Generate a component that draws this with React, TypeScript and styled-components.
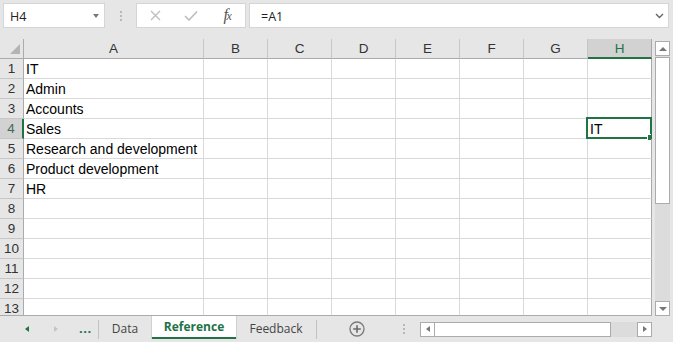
import React from 'react';
import styled, { createGlobalStyle } from 'styled-components';

const GREEN = '#217346';
const UI_FONT = '"Open Sans", "Noto Sans", "Liberation Sans", sans-serif';
const CELL_FONT = '"Liberation Sans", Arial, sans-serif';

const Global = createGlobalStyle`
  html, body { margin: 0; padding: 0; background: #e6e6e6; }
  #root { width: 673px; height: 342px; overflow: hidden; }
  * { box-sizing: border-box; }
`;

const Window = styled.div`
  width: 673px;
  height: 342px;
  display: flex;
  flex-direction: column;
  background: #e6e6e6;
  overflow: hidden;
`;

/* ---------- top formula bar ---------- */
const TopBar = styled.div`
  height: 39px;
  flex: none;
  display: flex;
  align-items: flex-start;
  padding: 3px 0 0 3px;
`;

const Field = styled.div<{ $w: number; $ml?: number; $pl?: number }>`
  width: ${p => p.$w}px;
  height: 25px;
  margin-left: ${p => p.$ml ?? 0}px;
  padding-left: ${p => p.$pl ?? 0}px;
  background: #fff;
  border: 1px solid #d5d5d5;
  display: flex;
  align-items: center;
  font-family: ${UI_FONT};
  font-size: 12.5px;
  color: #222;
`;

const FieldText = styled.span`
  flex: 1;
  padding-top: 1px;
`;

const Caret = styled.span`
  width: 0;
  height: 0;
  margin-right: 5px;
  border-left: 3.5px solid transparent;
  border-right: 3.5px solid transparent;
  border-top: 4px solid #777;
`;

const Chevron = styled.svg`
  width: 9px;
  height: 6px;
  margin-right: 4px;
`;

const DotSep = styled.div<{ $w: number; $h: number; $pr?: number }>`
  width: ${p => p.$w}px;
  height: ${p => p.$h}px;
  padding-right: ${p => p.$pr ?? 0}px;
  display: flex;
  align-items: center;
  justify-content: ${p => (p.$pr ? 'flex-end' : 'center')};
  flex: none;
`;

const Dots = styled.div`
  display: flex;
  flex-direction: column;
  gap: 2px;
  span {
    width: 2px;
    height: 2px;
    background: #b8b8b8;
    display: block;
  }
`;

const IconSlot = styled.div`
  width: 36px;
  height: 100%;
  display: flex;
  align-items: center;
  justify-content: center;
`;

const FxText = styled.span`
  font-family: "Liberation Serif", "DejaVu Serif", serif;
  font-style: italic;
  font-size: 16px;
  color: #555;
  letter-spacing: -1.5px;
  padding-bottom: 2px;
  span { font-size: 12px; }
`;

/* ---------- sheet ---------- */
const Main = styled.div`
  height: 277px;
  flex: none;
  display: flex;
`;

const Sheet = styled.div`
  width: 652px;
  height: 277px;
  overflow: hidden;
  background: #fff;
  border-bottom: 1px solid #ababab;
  display: grid;
  grid-template-columns: 24px 180px repeat(7, 64px);
  grid-auto-rows: 20px;
  font-family: ${CELL_FONT};
  font-size: 14px;
`;

const Cell = styled.div<{ $last?: boolean }>`
  position: relative;
  border-right: 1px solid ${p => (p.$last ? '#a8a8a8' : '#d9d9d9')};
  border-bottom: 1px solid #d9d9d9;
  padding: 0 0 0 2px;
  display: flex;
  align-items: center;
  white-space: nowrap;
  color: #000;
`;

const ColHead = styled.div<{ $sel?: boolean; $last?: boolean }>`
  background: ${p => (p.$sel ? '#d2d2d2' : '#e6e6e6')};
  border-right: 1px solid ${p => (p.$last ? '#a8a8a8' : '#c6c6c6')};
  border-bottom: ${p => (p.$sel ? `2px solid ${GREEN}` : '1px solid #ababab')};
  display: flex;
  align-items: center;
  justify-content: center;
  color: ${p => (p.$sel ? GREEN : '#333')};
  font-size: 13.5px;
`;

const RowHead = styled.div<{ $sel?: boolean }>`
  background: ${p => (p.$sel ? '#d2d2d2' : '#e6e6e6')};
  border-right: ${p => (p.$sel ? `2px solid ${GREEN}` : '1px solid #ababab')};
  border-bottom: 1px solid #c6c6c6;
  display: flex;
  align-items: center;
  justify-content: center;
  color: ${p => (p.$sel ? '#3f6b55' : '#333')};
  font-size: 13.5px;
`;

const Corner = styled.div`
  background: #e6e6e6;
  border-right: 1px solid #ababab;
  border-bottom: 1px solid #ababab;
  display: flex;
  align-items: flex-end;
  justify-content: flex-end;
  padding: 0 3px 4px 0;
`;

const CornerTri = styled.div`
  width: 0;
  height: 0;
  border-left: 10px solid transparent;
  border-bottom: 10px solid #b4b4b4;
`;

const Selection = styled.div`
  position: absolute;
  left: -2px;
  top: -2px;
  width: 66px;
  height: 22px;
  border: 2px solid ${GREEN};
  pointer-events: none;
`;

const FillHandle = styled.div`
  position: absolute;
  right: -2px;
  bottom: -3px;
  width: 4px;
  height: 5px;
  background: ${GREEN};
  box-shadow: -1px -1px 0 #fff;
`;

/* ---------- scrollbars ---------- */
const VScrollArea = styled.div`
  width: 21px;
  padding: 2px 0 0 3px;
  display: flex;
`;

const VScroll = styled.div`
  width: 15px;
  height: 275px;
  display: flex;
  flex-direction: column;
  gap: 1px;
  background: #dcdcdc;
`;

const ScrollBtn = styled.div<{ $len?: number }>`
  flex: none;
  width: ${p => p.$len ?? 15}px;
  height: 15px;
  background: #fff;
  border: 1px solid #ababab;
  display: flex;
  align-items: center;
  justify-content: center;
`;

const VThumb = styled.div`
  height: 147px;
  flex: none;
  background: #fff;
  border: 1px solid #ababab;
`;

const Track = styled.div`
  flex: 1;
  background: #dcdcdc;
`;

const Tri = styled.span<{ $dir: 'up' | 'down' | 'left' | 'right'; $color?: string }>`
  width: 0;
  height: 0;
  ${p => {
    const c = p.$color ?? '#777';
    switch (p.$dir) {
      case 'up':
        return `border-left:4px solid transparent;border-right:4px solid transparent;border-bottom:4px solid ${c};`;
      case 'down':
        return `border-left:4px solid transparent;border-right:4px solid transparent;border-top:4px solid ${c};`;
      case 'left':
        return `border-top:3.5px solid transparent;border-bottom:3.5px solid transparent;border-right:4px solid ${c};`;
      default:
        return `border-top:3.5px solid transparent;border-bottom:3.5px solid transparent;border-left:4px solid ${c};`;
    }
  }}
`;

/* ---------- sheet tabs ---------- */
const TabBar = styled.div`
  height: 26px;
  flex: none;
  display: flex;
  align-items: stretch;
  font-family: ${UI_FONT};
  font-size: 12px;
`;

const Nav = styled.div`
  width: 98px;
  display: flex;
  align-items: center;
  padding-left: 25px;
`;

const NavGap = styled.span<{ $w: number }>`
  width: ${p => p.$w}px;
`;

const Ellipsis = styled.span`
  color: ${GREEN};
  font-weight: 700;
  font-size: 13px;
  letter-spacing: 0.5px;
  padding-bottom: 2px;
`;

const VSep = styled.div`
  width: 1px;
  height: 19px;
  align-self: center;
  background: #c2c2c2;
`;

const Tab = styled.div<{ $w: number; $active?: boolean }>`
  width: ${p => p.$w}px;
  display: flex;
  align-items: center;
  justify-content: center;
  padding-bottom: ${p => (p.$active ? 0 : 1)}px;
  color: ${p => (p.$active ? GREEN : '#444')};
  font-weight: ${p => (p.$active ? 700 : 400)};
  background: ${p => (p.$active ? '#fff' : 'transparent')};
  height: ${p => (p.$active ? '23px' : 'auto')};
  border-bottom: ${p => (p.$active ? `2px solid ${GREEN}` : 'none')};
  box-shadow: ${p => (p.$active ? '1px 0 0 #d0d0d0, -1px 0 0 #d0d0d0' : 'none')};
  margin-left: ${p => (p.$active ? 1 : 0)}px;
`;

const AddBtn = styled.div`
  margin-left: 32px;
  width: 16px;
  display: flex;
  align-items: center;
  justify-content: center;
`;

const HScrollWrap = styled.div`
  display: flex;
  align-items: center;
`;

const HScroll = styled.div`
  width: 232px;
  height: 15px;
  display: flex;
`;

const HThumb = styled.div`
  width: 176px;
  height: 15px;
  background: #fff;
  border: 1px solid #ababab;
  border-left: none;
`;

const HTrack = styled.div`
  flex: 1;
  height: 15px;
  background: #dcdcdc;
`;

const cols = ['A', 'B', 'C', 'D', 'E', 'F', 'G', 'H'];
const data = [
  'IT',
  'Admin',
  'Accounts',
  'Sales',
  'Research and development',
  'Product development',
  'HR',
  '', '', '', '', '', '',
];

export default function App() {
  return (
    <Window>
      <Global />
      <TopBar>
        <Field $w={102} $pl={6}>
          <FieldText>H4</FieldText>
          <Caret />
        </Field>
        <DotSep $w={31} $h={25}>
          <Dots><span /><span /><span /></Dots>
        </DotSep>
        <Field $w={110}>
          <IconSlot>
            <svg width="11" height="11" viewBox="0 0 11 11">
              <path d="M1 1 L10 10 M10 1 L1 10" stroke="#bdbdbd" strokeWidth="1.3" fill="none" />
            </svg>
          </IconSlot>
          <IconSlot>
            <svg width="14" height="11" viewBox="0 0 14 11">
              <path d="M1 6 L5 10 L13 1.5" stroke="#bdbdbd" strokeWidth="1.6" fill="none" />
            </svg>
          </IconSlot>
          <IconSlot>
            <FxText>f<span>x</span></FxText>
          </IconSlot>
        </Field>
        <Field $w={420} $ml={3} $pl={11}>
          <FieldText>=A1</FieldText>
          <Chevron viewBox="0 0 9 6">
            <path d="M1 1 L4.5 4.5 L8 1" stroke="#666" strokeWidth="1.4" fill="none" />
          </Chevron>
        </Field>
      </TopBar>

      <Main>
        <Sheet>
          <Corner><CornerTri /></Corner>
          {cols.map((c, i) => (
            <ColHead key={c} $sel={c === 'H'} $last={i === cols.length - 1}>{c}</ColHead>
          ))}
          {data.map((txt, r) => (
            <React.Fragment key={r}>
              <RowHead $sel={r === 3}>{r + 1}</RowHead>
              <Cell>{txt}</Cell>
              {cols.slice(1).map((c, i) => (
                <Cell key={c} $last={i === cols.length - 2}>
                  {c === 'H' && r === 3 ? (
                    <>
                      IT
                      <Selection><FillHandle /></Selection>
                    </>
                  ) : null}
                </Cell>
              ))}
            </React.Fragment>
          ))}
        </Sheet>
        <VScrollArea>
          <VScroll>
            <ScrollBtn><Tri $dir="up" /></ScrollBtn>
            <VThumb />
            <Track />
            <ScrollBtn><Tri $dir="down" /></ScrollBtn>
          </VScroll>
        </VScrollArea>
      </Main>

      <TabBar>
        <Nav>
          <Tri $dir="left" $color={GREEN} />
          <NavGap $w={25} />
          <Tri $dir="right" $color="#c4c4c4" />
          <NavGap $w={21} />
          <Ellipsis>...</Ellipsis>
        </Nav>
        <VSep />
        <Tab $w={52}>Data</Tab>
        <Tab $w={84} $active>Reference</Tab>
        <Tab $w={80}>Feedback</Tab>
        <VSep />
        <AddBtn>
          <svg width="16" height="16" viewBox="0 0 16 16">
            <circle cx="8" cy="8" r="7" stroke="#7a7a7a" strokeWidth="1.3" fill="none" />
            <path d="M8 4.2 V11.8 M4.2 8 H11.8" stroke="#6a6a6a" strokeWidth="1.6" />
          </svg>
        </AddBtn>
        <DotSep $w={55} $h={26} $pr={15}>
          <Dots><span /><span /><span /></Dots>
        </DotSep>
        <HScrollWrap>
          <HScroll>
            <ScrollBtn><Tri $dir="left" /></ScrollBtn>
            <HThumb />
            <HTrack />
            <ScrollBtn><Tri $dir="right" /></ScrollBtn>
          </HScroll>
        </HScrollWrap>
      </TabBar>
    </Window>
  );
}
